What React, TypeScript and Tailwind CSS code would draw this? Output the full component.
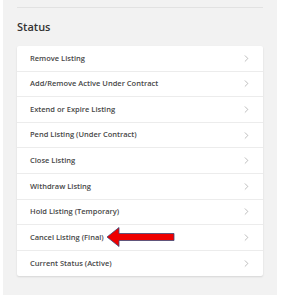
import { ChevronRight } from 'lucide-react';

const items = [
  'Remove Listing',
  'Add/Remove Active Under Contract',
  'Extend or Expire Listing',
  'Pend Listing (Under Contract)',
  'Close Listing',
  'Withdraw Listing',
  'Hold Listing (Temporary)',
  'Cancel Listing (Final)',
  'Current Status (Active)',
];

function Arrow() {
  return (
    <svg width="70" height="22" viewBox="0 0 70 22" className="ml-[2px]">
      <path
        d="M1 11 L13 1.5 L13 7.5 L68 7.5 L68 14.5 L13 14.5 L13 20.5 Z"
        fill="#ee0000"
        stroke="#3a4a7a"
        strokeWidth="0.8"
        strokeLinejoin="round"
      />
    </svg>
  );
}

export default function App() {
  return (
    <div className="w-[281px] h-[300px] bg-white pl-[3px] pr-[4px] font-['Open_Sans',sans-serif]">
      <div className="h-[295px] bg-[#f2f2f2] px-[14px] pt-[7px]">
        <div className="border-t border-[#e2e2e2]" />
        <h2 className="mt-[11px] text-[11px] leading-[16px] font-semibold text-[#333]">Status</h2>
        <div className="mt-[11px] bg-white rounded-[2px] shadow-[0_1px_2px_rgba(0,0,0,0.12)]">
          {items.map((label, i) => (
            <div
              key={label}
              className={`flex items-center h-[25.6px] pl-[13px] pr-[11px] ${
                i < items.length - 1 ? 'border-b border-[#ececec]' : ''
              }`}
            >
              <span className="text-[7.5px] font-semibold text-[#474747]">{label}</span>
              {label === 'Cancel Listing (Final)' && <Arrow />}
              <ChevronRight className="ml-auto w-[11px] h-[11px] text-[#9a9a9a]" strokeWidth={1.4} />
            </div>
          ))}
        </div>
      </div>
    </div>
  );
}
